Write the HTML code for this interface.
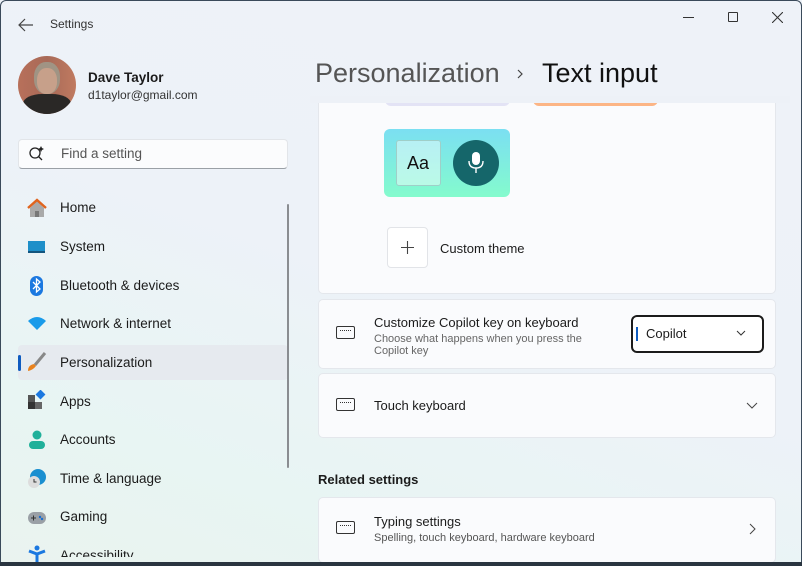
<!DOCTYPE html>
<html><head><meta charset="utf-8"><style>
*{box-sizing:border-box;margin:0;padding:0}
body{width:802px;height:566px;overflow:hidden;font-family:"Segoe UI","Liberation Sans",sans-serif;color:#1b1b1b;position:relative;
background:linear-gradient(200deg,#eef2f8 0%,#edf2f8 50%,#e8f5f3 80%,#eaf3ef 100%);}
.win{position:absolute;inset:0;border:1px solid #3a4a5a;border-radius:6px 6px 0 0;}
.abs{position:absolute}
.t{font-size:13px}
.nav{position:absolute;left:60px;font-size:13.5px;color:#1b1b1b}
.ico{position:absolute;left:27px;width:20px;height:20px}
.card{position:absolute;left:318px;width:458px;background:#fafbfd;border:1px solid #e4e7ec;border-radius:5px}
.kb{position:absolute;left:336px;width:19px;height:13px;border:1.6px solid #333;border-radius:2px}
.kb:after{content:"";position:absolute;left:3px;right:3px;top:3px;border-top:1.5px dotted #333;}
</style></head><body>
<div class="win"></div>
<svg class="abs" style="left:18px;top:18px" width="16" height="14"><path d="M7 1 L1 7 L7 13 M1 7 H15" stroke="#444" fill="none" stroke-width="1.2"/></svg>
<div class="abs" style="left:50px;top:17px;font-size:12px;color:#333">Settings</div>
<div class="abs" style="left:683px;top:17px;width:11px;border-top:1px solid #333"></div>
<div class="abs" style="left:728px;top:12px;width:10px;height:10px;border:1px solid #333;border-radius:1px"></div>
<svg class="abs" style="left:772px;top:12px" width="11" height="11"><path d="M0 0L11 11M11 0L0 11" stroke="#333" stroke-width="1.1"/></svg>
<div class="abs" style="left:18px;top:56px;width:58px;height:58px;border-radius:50%;overflow:hidden;background:linear-gradient(90deg,#b8705a,#a86a58 50%,#c07a60)">
<div class="abs" style="left:16px;top:6px;width:26px;height:32px;border-radius:45%;background:#a09484"></div>
<div class="abs" style="left:19px;top:12px;width:20px;height:26px;border-radius:45%;background:#c7a08a"></div>
<div class="abs" style="left:5px;top:38px;width:48px;height:24px;border-radius:40% 40% 0 0;background:#2a2826"></div>
</div>
<div class="abs" style="left:88px;top:70px;font-size:13.5px;font-weight:bold">Dave Taylor</div>
<div class="abs" style="left:88px;top:88px;font-size:12px;color:#333">d1taylor@gmail.com</div>
<div class="abs" style="left:18px;top:139px;width:270px;height:30px;background:#fbfcfd;border:1px solid #e2e5e9;border-bottom:1px solid #9aa0a6;border-radius:4px"></div>
<svg class="abs" style="left:28px;top:145px" width="18" height="18"><circle cx="7" cy="8" r="5" stroke="#222" stroke-width="1.3" fill="none"/><path d="M10.5 11.5L14 15" stroke="#222" stroke-width="1.3"/><path d="M13 1l1 2 2 1-2 1-1 2-1-2-2-1 2-1z" fill="#222"/></svg>
<div class="abs" style="left:61px;top:146px;font-size:13.5px;color:#555">Find a setting</div>
<div class="abs" style="left:18px;top:345px;width:270px;height:35px;background:#e6eaef;border-radius:4px"></div>
<div class="abs" style="left:18px;top:355px;width:3px;height:16px;background:#0f5cc0;border-radius:2px"></div>
<div class="abs" style="left:287px;top:204px;width:2px;height:264px;background:#8a8d91;border-radius:1px"></div>
<svg class="ico" style="top:198px" viewBox="0 0 20 20"><path d="M3 10V19H17V10L10 3z" fill="#a9a9a9"/><path d="M1 10L10 2L19 10" stroke="#e0641e" stroke-width="2.4" fill="none"/><rect x="8" y="13" width="4" height="6" fill="#777"/></svg>
<div class="nav" style="top:200px">Home</div>
<svg class="ico" style="top:238px" viewBox="0 0 20 20"><rect x="1" y="3" width="17" height="12" fill="#1e8fc9"/><rect x="1" y="13" width="17" height="2" fill="#14557e"/></svg>
<div class="nav" style="top:239px">System</div>
<svg class="ico" style="top:276px" viewBox="0 0 20 20"><rect x="3" y="0" width="13" height="20" rx="6.5" fill="#1b78e0"/><path d="M6 6l7 7-3.5 3V3L13 6 6 13" stroke="#fff" stroke-width="1.3" fill="none"/></svg>
<div class="nav" style="top:278px">Bluetooth &amp; devices</div>
<svg class="ico" style="top:314px" viewBox="0 0 20 20"><path d="M1 7Q10 -1 19 7L10 16z" fill="#1a9bea"/></svg>
<div class="nav" style="top:316px">Network &amp; internet</div>
<svg class="ico" style="top:352px" viewBox="0 0 20 20"><path d="M18 1L8 13" stroke="#888" stroke-width="3"/><path d="M7 12Q1 13 1 19Q6 18 9 14z" fill="#e8821e"/></svg>
<div class="nav" style="top:355px">Personalization</div>
<svg class="ico" style="top:390px" viewBox="0 0 20 20"><rect x="1" y="5" width="7" height="7" fill="#555"/><rect x="1" y="12" width="7" height="7" fill="#333"/><rect x="8" y="12" width="7" height="7" fill="#666"/><rect x="10" y="1" width="7" height="7" fill="#1b78e0" transform="rotate(45 13.5 4.5)"/></svg>
<div class="nav" style="top:394px">Apps</div>
<svg class="ico" style="top:430px" viewBox="0 0 20 20"><circle cx="10" cy="5" r="4.5" fill="#20b09a"/><rect x="2" y="11" width="16" height="8" rx="4" fill="#20b09a"/></svg>
<div class="nav" style="top:432px">Accounts</div>
<svg class="ico" style="top:469px" viewBox="0 0 20 20"><circle cx="11" cy="8" r="8" fill="#1a8fd0"/><circle cx="7" cy="13" r="6" fill="#ddd"/><path d="M7 10v3h2.5" stroke="#333" fill="none"/></svg>
<div class="nav" style="top:471px">Time &amp; language</div>
<svg class="ico" style="top:508px" viewBox="0 0 20 20"><rect x="1" y="4" width="18" height="12" rx="6" fill="#9aa0a6"/><circle cx="13" cy="9" r="1.2" fill="#1b6fd0"/><circle cx="15" cy="11" r="1.2" fill="#1b6fd0"/><path d="M4 10h5M6.5 7.5v5" stroke="#333"/></svg>
<div class="nav" style="top:509px">Gaming</div>
<svg class="ico" style="top:545px" viewBox="0 0 20 20"><circle cx="10" cy="3" r="2.5" fill="#1b78e0"/><path d="M2 6L10 9L18 6M10 9v8" stroke="#1b78e0" stroke-width="3" fill="none"/></svg>
<div class="nav" style="top:548px;height:9px;overflow:hidden">Accessibility</div>
<div class="abs" style="left:315px;top:58px;font-size:27px;color:#555">Personalization</div>
<svg class="abs" style="left:516px;top:68px" width="8" height="12"><path d="M2 2l4 4-4 4" stroke="#444" fill="none" stroke-width="1.2"/></svg>
<div class="abs" style="left:542px;top:58px;font-size:27px;color:#111">Text input</div>
<div class="card" style="top:103px;height:191px;border-top:none;border-radius:0 0 5px 5px"></div>
<div class="abs" style="left:385px;top:96px;width:125px;height:10px;background:#e3e3f5;border-radius:0 0 6px 6px"></div>
<div class="abs" style="left:533px;top:96px;width:125px;height:10px;background:#fcb585;border-radius:0 0 6px 6px"></div>
<div class="abs" style="left:310px;top:96px;width:480px;height:7px;background:#edf1f7"></div>
<div class="abs" style="left:384px;top:129px;width:126px;height:68px;border-radius:6px;background:linear-gradient(#7bdff2,#84fbcd)"></div>
<div class="abs" style="left:396px;top:140px;width:45px;height:46px;border-radius:3px;background:rgba(255,255,255,0.45);border:1px solid #9fcfc8"></div>
<div class="abs" style="left:407px;top:153px;font-size:18px;color:#111">Aa</div>
<div class="abs" style="left:453px;top:140px;width:46px;height:46px;border-radius:50%;background:#15666a"></div>
<svg class="abs" style="left:466px;top:151px" width="20" height="24"><rect x="6" y="1" width="8" height="13" rx="4" fill="#fff"/><path d="M3 10q0 7 7 7t7-7M10 17v5" stroke="#fff" stroke-width="1.4" fill="none"/></svg>
<div class="abs" style="left:387px;top:227px;width:41px;height:41px;border-radius:4px;background:#fff;border:1px solid #e2e4e8"></div>
<svg class="abs" style="left:400px;top:240px" width="15" height="15"><path d="M7.5 1v13M1 7.5h13" stroke="#444" stroke-width="1.1"/></svg>
<div class="abs t" style="left:440px;top:241px">Custom theme</div>
<div class="card" style="top:299px;height:70px"></div>
<div class="kb" style="top:326px"></div>
<div class="abs t" style="left:374px;top:315px">Customize Copilot key on keyboard</div>
<div class="abs" style="left:374px;top:333px;font-size:11px;color:#666;line-height:12px;width:240px">Choose what happens when you press the Copilot key</div>
<div class="abs" style="left:631px;top:315px;width:133px;height:38px;border:2px solid #1b1b1b;border-radius:6px;background:#fff"></div>
<div class="abs" style="left:636px;top:327px;width:2px;height:14px;background:#0f5cc0"></div>
<div class="abs t" style="left:646px;top:326px">Copilot</div>
<svg class="abs" style="left:736px;top:330px" width="10" height="6"><path d="M1 1l4 4 4-4" stroke="#333" fill="none"/></svg>
<div class="card" style="top:373px;height:65px"></div>
<div class="kb" style="top:398px"></div>
<div class="abs t" style="left:374px;top:398px">Touch keyboard</div>
<svg class="abs" style="left:746px;top:402px" width="12" height="7"><path d="M1 1l5 5 5-5" stroke="#444" fill="none"/></svg>
<div class="abs" style="left:318px;top:472px;font-size:13px;font-weight:bold;color:#1b1b1b">Related settings</div>
<div class="card" style="top:497px;height:66px"></div>
<div class="kb" style="top:521px"></div>
<div class="abs t" style="left:374px;top:514px">Typing settings</div>
<div class="abs" style="left:374px;top:532px;font-size:11px;color:#555">Spelling, touch keyboard, hardware keyboard</div>
<svg class="abs" style="left:749px;top:523px" width="7" height="12"><path d="M1 1l5 5-5 5" stroke="#444" fill="none"/></svg>
<div class="abs" style="left:0;top:562px;width:802px;height:4px;background:#2a3540"></div>
</body></html>
